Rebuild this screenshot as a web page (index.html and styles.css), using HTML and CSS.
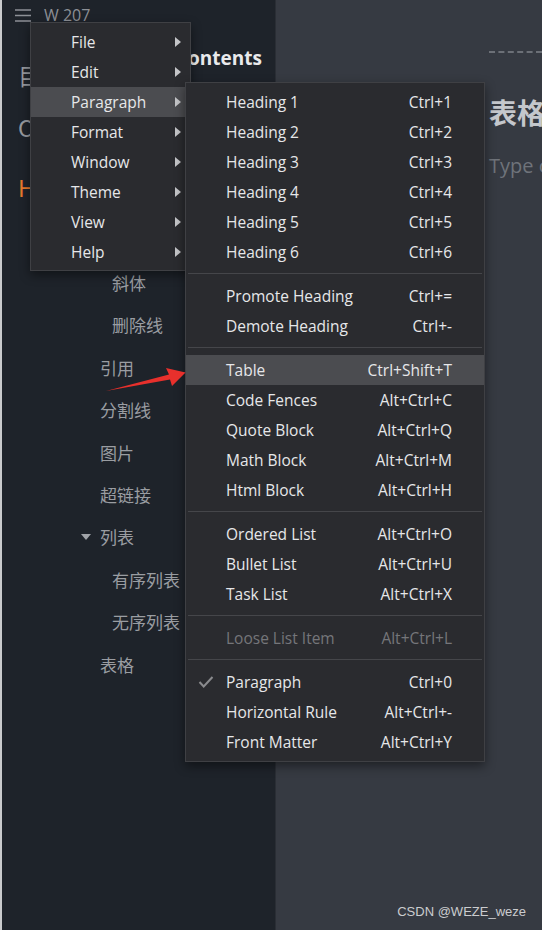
FILE: index.html
```html
<!DOCTYPE html>
<html lang="zh-CN">
<head>
<meta charset="utf-8">
<title>Typora</title>
<link rel="stylesheet" href="styles.css">
</head>
<body>
<div class="app">
  <aside class="sidebar">
    <div class="topbar">
      <svg class="burger" width="16" height="13" viewBox="0 0 16 13"><path d="M0 1h16M0 6.5h16M0 12h16" stroke="#8d9096" stroke-width="1.6"/></svg>
      <span class="doc-title">W 207</span>
    </div>
    <div class="toc-title">Table of Contents</div>
    <ul class="outline">
      <li class="h1 first">目录</li>
      <li class="h1 second">Content</li>
      <li class="h1 active">Heading</li>
      <li class="lv3 gap">加粗</li>
      <li class="lv3">斜体</li>
      <li class="lv3">删除线</li>
      <li class="lv2">引用</li>
      <li class="lv2">分割线</li>
      <li class="lv2">图片</li>
      <li class="lv2">超链接</li>
      <li class="lv2 open"><span class="caret"></span>列表</li>
      <li class="lv3">有序列表</li>
      <li class="lv3">无序列表</li>
      <li class="lv2">表格</li>
    </ul>
  </aside>
  <main class="editor">
    <div class="rule"></div>
    <h2 class="heading">表格</h2>
    <p class="placeholder">Type or paste your content</p>
  </main>

  <div class="menu main-menu">
    <div class="item"><span class="label">File</span><span class="sub-arrow"></span></div>
    <div class="item"><span class="label">Edit</span><span class="sub-arrow"></span></div>
    <div class="item hover"><span class="label">Paragraph</span><span class="sub-arrow"></span></div>
    <div class="item"><span class="label">Format</span><span class="sub-arrow"></span></div>
    <div class="item"><span class="label">Window</span><span class="sub-arrow"></span></div>
    <div class="item"><span class="label">Theme</span><span class="sub-arrow"></span></div>
    <div class="item"><span class="label">View</span><span class="sub-arrow"></span></div>
    <div class="item"><span class="label">Help</span><span class="sub-arrow"></span></div>
  </div>

  <div class="menu sub-menu">
    <div class="item"><span class="label">Heading 1</span><span class="key">Ctrl+1</span></div>
    <div class="item"><span class="label">Heading 2</span><span class="key">Ctrl+2</span></div>
    <div class="item"><span class="label">Heading 3</span><span class="key">Ctrl+3</span></div>
    <div class="item"><span class="label">Heading 4</span><span class="key">Ctrl+4</span></div>
    <div class="item"><span class="label">Heading 5</span><span class="key">Ctrl+5</span></div>
    <div class="item"><span class="label">Heading 6</span><span class="key">Ctrl+6</span></div>
    <div class="sep"></div>
    <div class="item"><span class="label">Promote Heading</span><span class="key">Ctrl+=</span></div>
    <div class="item"><span class="label">Demote Heading</span><span class="key">Ctrl+-</span></div>
    <div class="sep"></div>
    <div class="item hover"><span class="label">Table</span><span class="key">Ctrl+Shift+T</span></div>
    <div class="item"><span class="label">Code Fences</span><span class="key">Alt+Ctrl+C</span></div>
    <div class="item"><span class="label">Quote Block</span><span class="key">Alt+Ctrl+Q</span></div>
    <div class="item"><span class="label">Math Block</span><span class="key">Alt+Ctrl+M</span></div>
    <div class="item"><span class="label">Html Block</span><span class="key">Alt+Ctrl+H</span></div>
    <div class="sep"></div>
    <div class="item"><span class="label">Ordered List</span><span class="key">Alt+Ctrl+O</span></div>
    <div class="item"><span class="label">Bullet List</span><span class="key">Alt+Ctrl+U</span></div>
    <div class="item"><span class="label">Task List</span><span class="key">Alt+Ctrl+X</span></div>
    <div class="sep"></div>
    <div class="item disabled"><span class="label">Loose List Item</span><span class="key">Alt+Ctrl+L</span></div>
    <div class="sep"></div>
    <div class="item checked">
      <svg class="check" width="16" height="12" viewBox="0 0 16 12"><path d="M1.5 6l4.2 4.5L14.5 1" fill="none" stroke="#8a8b8e" stroke-width="2"/></svg>
      <span class="label">Paragraph</span><span class="key">Ctrl+0</span>
    </div>
    <div class="item"><span class="label">Horizontal Rule</span><span class="key">Alt+Ctrl+-</span></div>
    <div class="item"><span class="label">Front Matter</span><span class="key">Alt+Ctrl+Y</span></div>
  </div>

  <svg class="pointer" width="90" height="40" viewBox="0 0 90 40">
    <polygon points="6,31 69,14.5 66,8 85.5,12.5 72,26 70,19.5" fill="#e8302c"/>
  </svg>

  <div class="watermark">CSDN @WEZE_weze</div>
</div>
</body>
</html>
```

FILE: styles.css
```css
* { box-sizing: border-box; }

html, body {
  margin: 0;
  padding: 0;
}

body {
  width: 542px;
  height: 930px;
  overflow: hidden;
  background: #363a42;
  font-family: "Open Sans", "Noto Sans CJK SC", sans-serif;
}

.app {
  position: relative;
  display: flex;
  width: 542px;
  height: 930px;
  border-left: 2px solid #c9cacc;
}

/* ---------- sidebar ---------- */
.sidebar {
  width: 274px;
  flex: none;
  background: #1e232a;
  border-right: 1px solid #2a2e35;
  color: #979a9f;
}

.topbar {
  height: 30px;
  display: flex;
  align-items: center;
  padding-left: 13px;
  gap: 13px;
}

.doc-title {
  font-size: 16px;
  color: #8d9096;
  margin-top: -1px;
}

.toc-title {
  margin-top: 18px;
  height: 20px;
  line-height: 20px;
  font-size: 19px;
  font-weight: 700;
  color: #e9eaec;
  text-align: right;
  padding-right: 13px;
  white-space: nowrap;
}

.outline {
  list-style: none;
  margin: 0;
  padding: 0;
  font-family: "Noto Sans CJK SC", "Open Sans", sans-serif;
}

.outline li {
  white-space: nowrap;
  display: flex;
  align-items: center;
}

.outline .h1 {
  height: 30px;
  padding-left: 16px;
  font-size: 23px;
  color: #979a9f;
}

.outline .first { margin-top: -8px; }
.outline .second { margin-top: 22px; }
.outline .active { margin-top: 30px; color: #e87b2c; }

.outline .lv2,
.outline .lv3 {
  height: 42.4px;
  font-size: 17px;
  color: #9a9da2;
}

.outline .lv2 { padding-left: 98px; }
.outline .lv3 { padding-left: 110px; }
.outline .gap { margin-top: 17px; }

.caret {
  width: 0;
  height: 0;
  border-left: 5px solid transparent;
  border-right: 5px solid transparent;
  border-top: 6px solid #a0a3a8;
  margin-left: -19px;
  margin-right: 9px;
}

/* ---------- editor ---------- */
.editor {
  flex: 1;
  padding-left: 213px;
  padding-top: 51px;
  overflow: hidden;
  white-space: nowrap;
}

.rule {
  border-top: 2px dashed #6c7077;
  width: 100%;
}

.heading {
  margin: 42px 0 0;
  font-family: "Noto Sans CJK SC", sans-serif;
  font-size: 28px;
  font-weight: 700;
  line-height: 34px;
  color: #c4c7cc;
}

.placeholder {
  margin: 24px 0 0;
  font-size: 20px;
  line-height: 26px;
  color: #6f737a;
}

/* ---------- menus ---------- */
.menu {
  position: absolute;
  background: #2a2b2f;
  border: 1px solid #3f4044;
  box-shadow: 0 4px 10px rgba(0, 0, 0, 0.45);
  color: #e6e7e9;
  font-size: 15.5px;
  padding: 4px 0;
}

.menu .item {
  position: relative;
  height: 30px;
  display: flex;
  align-items: center;
  justify-content: space-between;
  padding-left: 40px;
  white-space: nowrap;
}

.menu .item.hover { background: #4b4c50; }

.main-menu {
  left: 28px;
  top: 22px;
  width: 161px;
  padding-bottom: 3px;
}

.main-menu .item { padding-right: 9px; }

.sub-arrow {
  width: 0;
  height: 0;
  border-top: 5px solid transparent;
  border-bottom: 5px solid transparent;
  border-left: 6px solid #c4c5c8;
}

.sub-menu {
  left: 183px;
  top: 82px;
  width: 300px;
  z-index: 2;
}

.sub-menu .item { padding-right: 32px; }

.sep {
  height: 1px;
  margin: 6px 2px 7px;
  background: #45464a;
}

.item.disabled { color: #75767a; }

.check {
  position: absolute;
  left: 12px;
  top: 9px;
}

/* ---------- overlays ---------- */
.pointer {
  position: absolute;
  left: 98px;
  top: 360px;
  z-index: 3;
}

.watermark {
  position: absolute;
  right: 16px;
  top: 904px;
  font-family: "Liberation Sans", Arial, sans-serif;
  font-size: 13px;
  color: #cbcccf;
}
```
